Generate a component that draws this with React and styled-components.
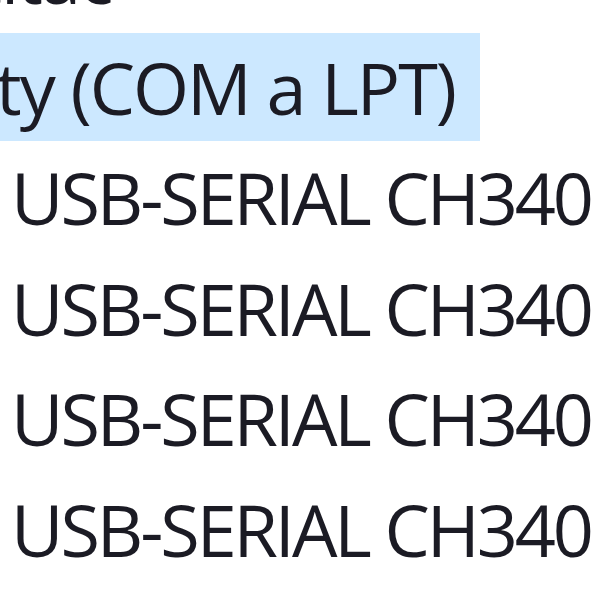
import React from "react";
import styled, { createGlobalStyle } from "styled-components";

const GlobalStyle = createGlobalStyle`
  html, body {
    margin: 0;
    padding: 0;
    background: #ffffff;
    overflow: hidden;
  }
  body {
    width: 600px;
    height: 600px;
  }
`;

const Viewport = styled.div`
  width: 600px;
  height: 600px;
  overflow: hidden;
  background: #ffffff;
`;

/* the tree is scrolled: its first visible row sits partly above the top edge,
   and its left part lies beyond the left edge */
const Tree = styled.ul`
  list-style: none;
  margin: -79px 0 0 -114px;
  padding: 0;
  width: 1000px;
  font-family: "Open Sans", "Noto Sans", "DejaVu Sans", sans-serif;
  font-size: 72px;
  color: #1b1b24;
`;

const Row = styled.li`
  display: flex;
  align-items: center;
  height: 110.5px;
  padding-left: ${(p) => (p.$device ? 125 : 0)}px;
  white-space: nowrap;
`;

const Label = styled.span`
  display: inline-block;
  height: 108px;
  line-height: 108px;
  padding: 0 25px 0 0;
  letter-spacing: ${(p) => (p.$device ? "-3.1px" : "-2px")};
  background: ${(p) => (p.$selected ? "#cce8ff" : "transparent")};
`;

const items = [
  { text: "Počítač" },
  { text: "Porty (COM a LPT)", selected: true },
  { text: "USB-SERIAL CH340 (COM3)", device: true },
  { text: "USB-SERIAL CH340 (COM4)", device: true },
  { text: "USB-SERIAL CH340 (COM5)", device: true },
  { text: "USB-SERIAL CH340 (COM6)", device: true },
];

export default function App() {
  return (
    <Viewport>
      <GlobalStyle />
      <Tree>
        {items.map((it, i) => (
          <Row key={i} $device={it.device}>
            <Label $device={it.device} $selected={it.selected}>
              {it.text}
            </Label>
          </Row>
        ))}
      </Tree>
    </Viewport>
  );
}
